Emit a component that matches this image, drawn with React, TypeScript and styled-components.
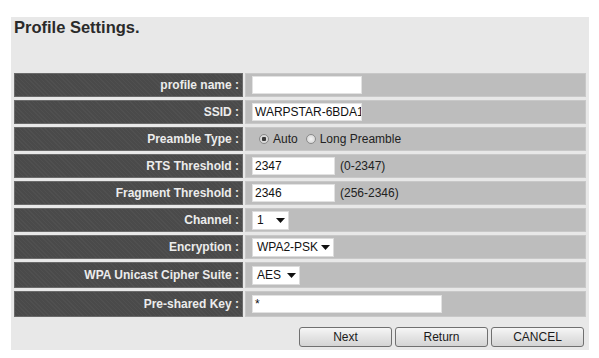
import React from "react";
import styled, { createGlobalStyle } from "styled-components";

const Global = createGlobalStyle`
  html, body { margin: 0; padding: 0; background: #ffffff; }
  body { font-family: "Liberation Sans", Arial, sans-serif; }
`;

const Panel = styled.div`
  margin: 17px 0 0 11px;
  width: 578px;
  height: 333px;
  box-sizing: border-box;
  background: #e8e8e8;
  padding: 0 3px;
  display: flex;
  flex-direction: column;
`;

const Title = styled.h1`
  margin: 0;
  height: 56px;
  padding: 0;
  box-sizing: border-box;
  font-size: 16.5px;
  font-weight: bold;
  color: #2a2a2a;
  line-height: 20px;
`;

const Table = styled.div`
  display: grid;
  grid-template-columns: 229px 341px;
  column-gap: 2px;
  row-gap: 3px;
`;

const Label = styled.div<{ $h: number }>`
  height: ${(p) => p.$h}px;
  box-sizing: border-box;
  background-color: #4a4a4a;
  background-image: repeating-linear-gradient(45deg, rgba(255,255,255,0.03) 0 1px, transparent 1px 3px);
  border: 1px solid #6a6a6a;
  color: #ececec;
  font-size: 12px;
  font-weight: bold;
  display: flex;
  align-items: center;
  justify-content: flex-end;
  padding-right: 3px;
  white-space: pre;
`;

const Value = styled.div<{ $h: number }>`
  height: ${(p) => p.$h}px;
  box-sizing: border-box;
  background: #bdbdbd;
  border: 1px solid #c8c8c8;
  display: flex;
  align-items: center;
  padding-left: 6px;
  gap: 4px;
  font-size: 12px;
  color: #222;
`;

const TextBox = styled.div<{ $w: number }>`
  width: ${(p) => p.$w}px;
  height: 18px;
  box-sizing: border-box;
  background: #ffffff;
  border: 1px solid #e2e2e2;
  font-size: 12px;
  color: #111;
  padding-left: 2px;
  display: flex;
  align-items: center;
  overflow: hidden;
  white-space: nowrap;
`;

const Hint = styled.span`
  font-size: 12px;
  color: #222;
  margin-left: 1px;
`;

const SelectBox = styled.div<{ $w: number }>`
  width: ${(p) => p.$w}px;
  height: 19px;
  box-sizing: border-box;
  background: #ffffff;
  border: 1px solid #dcdcdc;
  font-size: 12px;
  color: #111;
  padding: 0 3px 0 4px;
  display: flex;
  align-items: center;
  justify-content: space-between;
`;

const RadioGroup = styled.div`
  display: flex;
  align-items: center;
  padding-left: 7px;
  font-size: 12px;
  color: #222;
`;

const RadioItem = styled.label`
  display: flex;
  align-items: center;
  gap: 4px;
  margin-right: 8px;
`;

const RadioDot = styled.span<{ $on?: boolean }>`
  width: 10px;
  height: 10px;
  box-sizing: border-box;
  border-radius: 50%;
  border: 1px solid #8a8a8a;
  background: ${(p) =>
    p.$on
      ? "radial-gradient(circle, #3a3a3a 0 2px, #d8d8d8 2.5px)"
      : "radial-gradient(circle, #f4f4f4, #cfcfcf)"};
`;

const ButtonRow = styled.div`
  display: flex;
  justify-content: flex-end;
  gap: 3px;
  margin-top: 10px;
  padding-right: 2px;
`;

const Button = styled.button`
  width: 93px;
  height: 20px;
  box-sizing: border-box;
  border: 1px solid #707070;
  border-radius: 3px;
  background: linear-gradient(#f6f6f6, #e4e4e4 50%, #d4d4d4);
  font-family: "Liberation Sans", Arial, sans-serif;
  font-size: 12px;
  color: #1a1a1a;
  padding: 0;
`;

const Arrow = () => (
  <svg width="9" height="5" viewBox="0 0 9 5">
    <path d="M0 0 L9 0 L4.5 5 Z" fill="#111" />
  </svg>
);

const Select = ({ w, value }: { w: number; value: string }) => (
  <SelectBox $w={w}>
    <span>{value}</span>
    <Arrow />
  </SelectBox>
);

const rows: { label: string; h: number; content: React.ReactNode }[] = [
  { label: "profile name :", h: 24, content: <TextBox $w={110} /> },
  { label: "SSID :", h: 24, content: <TextBox $w={110}>WARPSTAR-6BDA18</TextBox> },
  {
    label: "Preamble Type :",
    h: 24,
    content: (
      <RadioGroup>
        <RadioItem>
          <RadioDot $on /> Auto
        </RadioItem>
        <RadioItem>
          <RadioDot /> Long Preamble
        </RadioItem>
      </RadioGroup>
    ),
  },
  {
    label: "RTS Threshold :",
    h: 24,
    content: (
      <>
        <TextBox $w={83}>2347</TextBox>
        <Hint>(0-2347)</Hint>
      </>
    ),
  },
  {
    label: "Fragment Threshold :",
    h: 24,
    content: (
      <>
        <TextBox $w={83}>2346</TextBox>
        <Hint>(256-2346)</Hint>
      </>
    ),
  },
  { label: "Channel :", h: 24, content: <Select w={37} value="1" /> },
  { label: "Encryption :", h: 24, content: <Select w={82} value="WPA2-PSK" /> },
  { label: "WPA Unicast Cipher Suite :", h: 26, content: <Select w={48} value="AES" /> },
  { label: "Pre-shared Key :", h: 26, content: <TextBox $w={190}>*</TextBox> },
];

export default function App() {
  return (
    <>
      <Global />
      <Panel>
        <Title>Profile Settings.</Title>
        <Table>
          {rows.map((r) => (
            <React.Fragment key={r.label}>
              <Label $h={r.h}>{r.label}</Label>
              <Value $h={r.h}>{r.content}</Value>
            </React.Fragment>
          ))}
        </Table>
        <ButtonRow>
          <Button>Next</Button>
          <Button>Return</Button>
          <Button>CANCEL</Button>
        </ButtonRow>
      </Panel>
    </>
  );
}
